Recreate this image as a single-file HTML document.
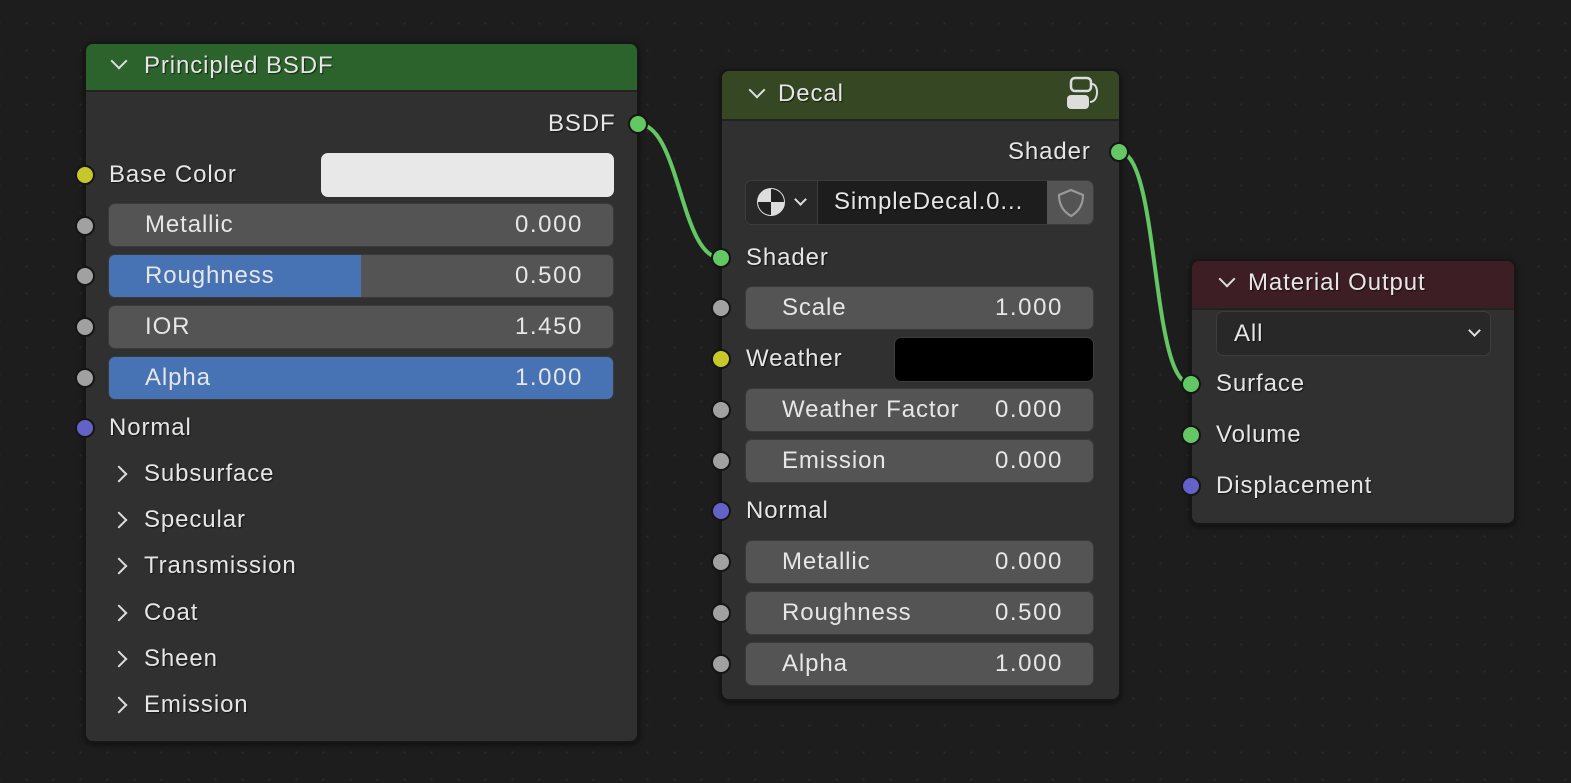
<!DOCTYPE html>
<html><head><meta charset="utf-8"><style>
*{margin:0;padding:0;box-sizing:border-box}
body{width:1571px;height:783px;overflow:hidden;position:relative;background-color:#1d1d1d;
background-image:radial-gradient(circle,#2a2a2a 1px,transparent 1.3px);background-size:27px 27px;background-position:13px 10px;
font-family:"Liberation Sans","DejaVu Sans",sans-serif;font-size:24px;letter-spacing:0.9px;color:#e6e6e6}
.node{position:absolute;background:#303030;border:2px solid #161616;border-radius:9px;overflow:hidden;box-shadow:0 2px 6px rgba(0,0,0,.5)}
.hdr{position:absolute;left:0;right:0;top:0;border-bottom:2px solid #222}
.t{position:absolute;white-space:nowrap;line-height:28px;text-shadow:1px 1px 1px rgba(0,0,0,.6)}
.f{position:absolute;background:#545454;border-radius:7px;height:44px;overflow:hidden;border:1px solid #3a3a3a}
.f .l{position:absolute;left:36px;top:7px;line-height:28px}
.f .v{position:absolute;right:30px;top:7px;line-height:28px;letter-spacing:1.6px}
.s{position:absolute;width:20px;height:20px;border-radius:50%;border:2px solid #151515}
.gy{background:#a1a1a1}.yl{background:#c7c729}.pu{background:#6363c7}.gr{background:#63c763}
.chev{position:absolute;width:12px;height:12px;border-right:2px solid #ddd;border-bottom:2px solid #ddd}
</style></head><body>
<svg width="1571" height="783" style="position:absolute;left:0;top:0">
<path d="M638 124 C680 124 680 258 721 258" stroke="#63c763" stroke-width="4" fill="none"/>
<path d="M1119 152 C1160 152 1150 384 1191 384" stroke="#63c763" stroke-width="4" fill="none"/>
</svg>

<!-- Principled BSDF -->
<div class="node" style="left:84px;top:42px;width:555px;height:701px">
<div class="hdr" style="height:48px;background:#2c622b"></div>
</div>
<div class="chev" style="left:113px;top:55px;transform:rotate(45deg)"></div>
<div class="t" style="left:144px;top:52px">Principled BSDF</div>
<div class="t" style="left:548px;top:110px">BSDF</div>
<div class="s gr" style="left:628px;top:114px"></div>
<div class="s yl" style="left:75px;top:165px"></div>
<div class="t" style="left:109px;top:161px">Base Color</div>
<div style="position:absolute;left:321px;top:153px;width:293px;height:44px;background:#e8e8e8;border-radius:7px"></div>
<div class="s gy" style="left:75px;top:216px"></div>
<div class="f" style="left:108px;top:203px;width:506px"><span class="l">Metallic</span><span class="v">0.000</span></div>
<div class="s gy" style="left:75px;top:266px"></div>
<div class="f" style="left:108px;top:254px;width:506px"><div style="position:absolute;left:0;top:0;bottom:0;width:252px;background:#4772b3"></div><span class="l">Roughness</span><span class="v">0.500</span></div>
<div class="s gy" style="left:75px;top:317px"></div>
<div class="f" style="left:108px;top:305px;width:506px"><span class="l">IOR</span><span class="v">1.450</span></div>
<div class="s gy" style="left:75px;top:368px"></div>
<div class="f" style="left:108px;top:356px;width:506px;background:#4772b3"><span class="l">Alpha</span><span class="v">1.000</span></div>
<div class="s pu" style="left:75px;top:418px"></div>
<div class="t" style="left:109px;top:414px">Normal</div>
<div class="chev" style="left:113px;top:468px;transform:rotate(-45deg)"></div><div class="t" style="left:144px;top:460px">Subsurface</div>
<div class="chev" style="left:113px;top:514px;transform:rotate(-45deg)"></div><div class="t" style="left:144px;top:506px">Specular</div>
<div class="chev" style="left:113px;top:560px;transform:rotate(-45deg)"></div><div class="t" style="left:144px;top:552px">Transmission</div>
<div class="chev" style="left:113px;top:607px;transform:rotate(-45deg)"></div><div class="t" style="left:144px;top:599px">Coat</div>
<div class="chev" style="left:113px;top:653px;transform:rotate(-45deg)"></div><div class="t" style="left:144px;top:645px">Sheen</div>
<div class="chev" style="left:113px;top:699px;transform:rotate(-45deg)"></div><div class="t" style="left:144px;top:691px">Emission</div>

<!-- Decal -->
<div class="node" style="left:720px;top:69px;width:401px;height:632px">
<div class="hdr" style="height:50px;background:#354823"></div>
</div>
<div class="chev" style="left:751px;top:84px;transform:rotate(45deg)"></div>
<div class="t" style="left:778px;top:80px">Decal</div>
<svg style="position:absolute;left:1066px;top:76px" width="36" height="36" viewBox="0 0 36 36">
<rect x="5" y="2" width="20" height="13" rx="4" fill="none" stroke="#ddd" stroke-width="2.5"/>
<rect x="1" y="19" width="22" height="14" rx="4" fill="#ddd"/>
<path d="M26 8 C33 8 33 26 24 26" stroke="#ddd" stroke-width="2" fill="none"/>
</svg>
<div class="t" style="left:1008px;top:138px">Shader</div>
<div class="s gr" style="left:1109px;top:142px"></div>
<div style="position:absolute;left:745px;top:180px;width:349px;height:45px;border-radius:7px;background:#1d1d1d;border:1px solid #3c3c3c;overflow:hidden">
<div style="position:absolute;left:0;top:0;width:72px;height:45px;background:#282828;border-right:1px solid #3c3c3c"></div>
<div style="position:absolute;right:0;top:0;width:46px;height:45px;background:#545454"></div>
</div>
<svg style="position:absolute;left:755px;top:186px" width="32" height="32" viewBox="0 0 32 32">
<circle cx="16" cy="16" r="13" fill="#ddd" stroke="#ddd" stroke-width="2"/>
<path d="M16 3 A13 13 0 0 1 29 16 L16 16Z M16 16 L3 16 A13 13 0 0 0 16 29Z" fill="#222"/>
</svg>
<div class="chev" style="left:796px;top:195px;width:9px;height:9px;transform:rotate(45deg)"></div>
<div class="t" style="left:834px;top:188px">SimpleDecal.0...</div>
<svg style="position:absolute;left:1056px;top:188px" width="30" height="30" viewBox="0 0 30 30">
<path d="M15 2 L27 7 C27 18 22 24 15 28 C8 24 3 18 3 7 Z" fill="none" stroke="#999" stroke-width="2.2"/>
</svg>
<div class="s gr" style="left:711px;top:248px"></div>
<div class="t" style="left:746px;top:244px">Shader</div>
<div class="s gy" style="left:711px;top:298px"></div>
<div class="f" style="left:745px;top:286px;width:349px"><span class="l">Scale</span><span class="v">1.000</span></div>
<div class="s yl" style="left:711px;top:349px"></div>
<div class="t" style="left:746px;top:345px">Weather</div>
<div style="position:absolute;left:894px;top:337px;width:200px;height:45px;background:#000;border-radius:7px;border:1px solid #3c3c3c"></div>
<div class="s gy" style="left:711px;top:400px"></div>
<div class="f" style="left:745px;top:388px;width:349px"><span class="l">Weather Factor</span><span class="v">0.000</span></div>
<div class="s gy" style="left:711px;top:451px"></div>
<div class="f" style="left:745px;top:439px;width:349px"><span class="l">Emission</span><span class="v">0.000</span></div>
<div class="s pu" style="left:711px;top:501px"></div>
<div class="t" style="left:746px;top:497px">Normal</div>
<div class="s gy" style="left:711px;top:552px"></div>
<div class="f" style="left:745px;top:540px;width:349px"><span class="l">Metallic</span><span class="v">0.000</span></div>
<div class="s gy" style="left:711px;top:603px"></div>
<div class="f" style="left:745px;top:591px;width:349px"><span class="l">Roughness</span><span class="v">0.500</span></div>
<div class="s gy" style="left:711px;top:654px"></div>
<div class="f" style="left:745px;top:642px;width:349px"><span class="l">Alpha</span><span class="v">1.000</span></div>

<!-- Material Output -->
<div class="node" style="left:1190px;top:259px;width:326px;height:266px">
<div class="hdr" style="height:49px;background:#3d1e24"></div>
</div>
<div class="chev" style="left:1221px;top:273px;transform:rotate(45deg)"></div>
<div class="t" style="left:1248px;top:269px">Material Output</div>
<div style="position:absolute;left:1216px;top:311px;width:275px;height:45px;background:#282828;border:1px solid #3c3c3c;border-radius:7px"></div>
<div class="t" style="left:1234px;top:320px">All</div>
<div class="chev" style="left:1470px;top:326px;width:9px;height:9px;transform:rotate(45deg)"></div>
<div class="s gr" style="left:1181px;top:374px"></div>
<div class="t" style="left:1216px;top:370px">Surface</div>
<div class="s gr" style="left:1181px;top:425px"></div>
<div class="t" style="left:1216px;top:421px">Volume</div>
<div class="s pu" style="left:1181px;top:476px"></div>
<div class="t" style="left:1216px;top:472px">Displacement</div>
</body></html>
